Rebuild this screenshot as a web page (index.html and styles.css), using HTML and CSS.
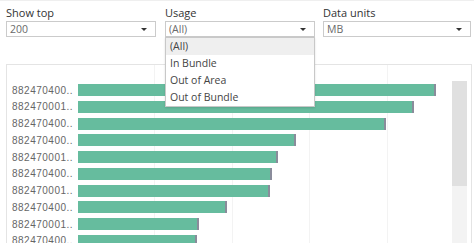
FILE: index.html
```html
<!DOCTYPE html>
<html>
<head>
<meta charset="utf-8">
<link rel="stylesheet" href="styles.css">
</head>
<body>
<div class="page">
  <div class="filters">
    <div class="filter f1">
      <div class="flabel">Show top</div>
      <div class="select"><span>200</span><i class="arrow"></i></div>
    </div>
    <div class="filter f2">
      <div class="flabel">Usage</div>
      <div class="select"><span>(All)</span><i class="arrow"></i></div>
      <ul class="menu">
        <li class="active">(All)</li>
        <li>In Bundle</li>
        <li>Out of Area</li>
        <li>Out of Bundle</li>
      </ul>
    </div>
    <div class="filter f3">
      <div class="flabel">Data units</div>
      <div class="select"><span>MB</span><i class="arrow"></i></div>
    </div>
  </div>
  <div class="panel">
    <div class="chart">
      <div class="row"><span class="lbl">882470400..</span><div class="track"><div class="bar" style="width:358px"></div></div></div>
      <div class="row"><span class="lbl">882470001..</span><div class="track"><div class="bar" style="width:336px"></div></div></div>
      <div class="row"><span class="lbl">882470400..</span><div class="track"><div class="bar" style="width:308px"></div></div></div>
      <div class="row"><span class="lbl">882470400..</span><div class="track"><div class="bar" style="width:218px"></div></div></div>
      <div class="row"><span class="lbl">882470001..</span><div class="track"><div class="bar" style="width:200px"></div></div></div>
      <div class="row"><span class="lbl">882470400..</span><div class="track"><div class="bar" style="width:194px"></div></div></div>
      <div class="row"><span class="lbl">882470001..</span><div class="track"><div class="bar" style="width:192px"></div></div></div>
      <div class="row"><span class="lbl">882470400..</span><div class="track"><div class="bar" style="width:149px"></div></div></div>
      <div class="row"><span class="lbl">882470001..</span><div class="track"><div class="bar" style="width:121px"></div></div></div>
      <div class="row"><span class="lbl">882470400..</span><div class="track"><div class="bar" style="width:119px"></div></div></div>
    </div>
    <div class="scroll"><div class="thumb"></div></div>
  </div>
</div>
</body>
</html>
```
FILE: styles.css
```css
html, body {
  margin: 0;
  padding: 0;
  background: #fff;
}
body {
  width: 474px;
  height: 243px;
  overflow: hidden;
  border-top: 1px solid #efefef;
  box-sizing: border-box;
}
.page {
  padding-left: 6px;
}
.filters {
  display: flex;
  position: relative;
}
.filter {
  position: relative;
}
.f1 { width: 150px; margin-right: 9px; }
.f2 { width: 150px; margin-right: 8px; }
.f3 { width: 148px; }
.flabel {
  font-family: "Open Sans", sans-serif;
  font-size: 11px;
  color: #333;
  line-height: 13px;
  margin-top: 5px;
  height: 15px;
}
.select {
  height: 16px;
  box-sizing: border-box;
  border: 1px solid #cbcbcb;
  display: flex;
  align-items: center;
  justify-content: space-between;
  padding: 0 8px 0 3px;
  font-family: "Open Sans", sans-serif;
  font-size: 10.5px;
  color: #6a6a6a;
}
.arrow {
  width: 0;
  height: 0;
  border-left: 3px solid transparent;
  border-right: 3px solid transparent;
  border-top: 3.5px solid #333;
}
.menu {
  position: absolute;
  top: 36px;
  left: 0;
  width: 150px;
  box-sizing: border-box;
  margin: 0;
  padding: 0;
  list-style: none;
  background: #fff;
  border: 1px solid #c8c8c8;
  box-shadow: 0 1px 2px rgba(0,0,0,0.12);
  z-index: 5;
  font-family: "Open Sans", sans-serif;
  font-size: 10.5px;
  color: #444;
}
.menu li {
  height: 17px;
  line-height: 17px;
  padding-left: 4px;
}
.menu li.active {
  background: #efefef;
}
.panel {
  margin-top: 27px;
  width: 466px;
  height: 200px;
  box-sizing: border-box;
  border: 1px solid #e4e4e4;
  display: flex;
}
.chart {
  flex: 1;
  padding-top: 19px;
  display: flex;
  flex-direction: column;
  gap: 4.75px;
  background-image: repeating-linear-gradient(to right, transparent 0, transparent 76.5px, #f3f3f3 76.5px, #f3f3f3 77.5px);
  background-position: 71px 0;
  background-size: calc(100% - 71px) 100%;
  background-repeat: no-repeat;
}
.row {
  display: flex;
  align-items: center;
  height: 12px;
}
.lbl {
  width: 71px;
  padding-left: 5px;
  box-sizing: border-box;
  font-family: "Liberation Sans", Arial, sans-serif;
  font-size: 10px;
  letter-spacing: 0.5px;
  color: #666;
  white-space: nowrap;
  overflow: hidden;
}
.track {
  flex: 1;
  height: 12px;
}
.bar {
  height: 12px;
  box-sizing: border-box;
  background: #66bc9e;
  border-right: 2px solid #8a8c9b;
}
.scroll {
  width: 15px;
  margin: 16px 4px 0 0;
  background: #f3f3f3;
}
.thumb {
  height: 105px;
  background: #e0e0e0;
}
```
